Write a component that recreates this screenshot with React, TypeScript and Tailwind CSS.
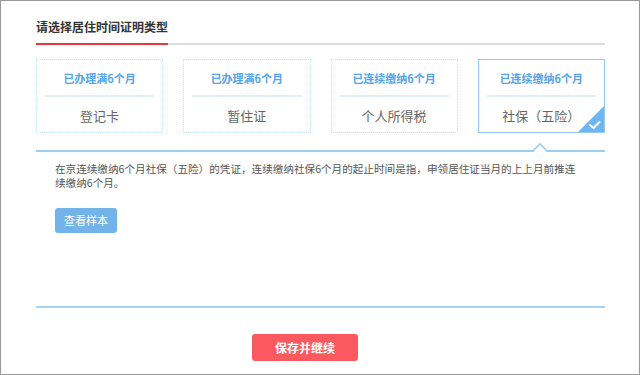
import React from "react";

const cards = [
  { label: "已办理满6个月", name: "登记卡", selected: false },
  { label: "已办理满6个月", name: "暂住证", selected: false },
  { label: "已连续缴纳6个月", name: "个人所得税", selected: false },
  { label: "已连续缴纳6个月", name: "社保（五险）", selected: true },
];

export default function App() {
  return (
    <div
      className="w-[640px] h-[375px] box-border border border-[#9a9a9a] bg-white pl-[35px] overflow-hidden"
      style={{ fontFamily: '"Microsoft YaHei", "Noto Sans CJK SC", "Noto Sans", sans-serif' }}
    >
      <div className="w-[569px]">
        {/* Header */}
        <div className="mt-[18px] flex border-b-2 border-[#dedede]">
          <div className="text-[12px] leading-[16px] font-bold text-[#333] pb-[8px] border-b-2 border-[#e8383d] -mb-[2px]">
            请选择居住时间证明类型
          </div>
        </div>

        {/* Cards */}
        <div className="mt-[14px] grid grid-cols-4 gap-x-[20px]">
          {cards.map((c, i) => (
            <div
              key={i}
              className={
                c.selected
                  ? "relative h-[74px] border border-solid border-[#92c9f2] px-[8px] pt-[11px] overflow-hidden"
                  : "relative h-[74px] border border-dotted border-[#c8e4f9] px-[8px] pt-[11px] overflow-hidden"
              }
            >
              <div className="text-[11px] leading-[14px] text-center font-semibold text-[#55a3e9]">
                {c.label}
              </div>
              <div className="mt-[10px] h-[2px] bg-[#e1effc]" />
              <div className="mt-[10px] text-[13px] leading-[18px] text-center text-[#666]">
                {c.name}
              </div>
              {c.selected && (
                <svg
                  className="absolute right-0 bottom-0"
                  width="26"
                  height="26"
                  viewBox="0 0 26 26"
                >
                  <polygon points="26,0 26,26 0,26" fill="#6db6f2" />
                  <polyline
                    points="12,19 15.5,22 21.5,16"
                    fill="none"
                    stroke="#ffffff"
                    strokeWidth="2"
                    strokeLinecap="round"
                    strokeLinejoin="round"
                  />
                </svg>
              )}
            </div>
          ))}
        </div>

        {/* Blue line with caret */}
        <div className="relative mt-[17px] h-[2px] bg-[#9dcff5]">
          <svg
            className="absolute left-[497px] -top-[8px]"
            width="14"
            height="10"
            viewBox="0 0 14 10"
          >
            <rect x="1" y="6" width="12" height="4" fill="#ffffff" />
            <polyline
              points="0,9 7,2 14,9"
              fill="#ffffff"
              stroke="#9dcff5"
              strokeWidth="1.6"
            />
          </svg>
        </div>

        {/* Description */}
        <div className="pl-[19px]">
          <p className="mt-[10px] w-[528px] text-[10.6px] leading-[14px] text-[#555]">
            在京连续缴纳6个月社保（五险）的凭证，连续缴纳社保6个月的起止时间是指，申领居住证当月的上上月前推连续缴纳6个月。
          </p>
          <button className="mt-[18px] w-[62px] h-[25px] rounded-[3px] bg-[#72b4ea] text-white text-[11px] leading-[25px] text-center">
            查看样本
          </button>
        </div>

        {/* Bottom line */}
        <div className="mt-[73px] h-[2px] bg-[#a7d3f7]" />

        <button className="mt-[26px] ml-[216px] w-[106px] h-[27px] rounded-[3px] bg-[#fa5a5f] text-white text-[12px] font-bold leading-[27px] text-center">
          保存并继续
        </button>
      </div>
    </div>
  );
}
